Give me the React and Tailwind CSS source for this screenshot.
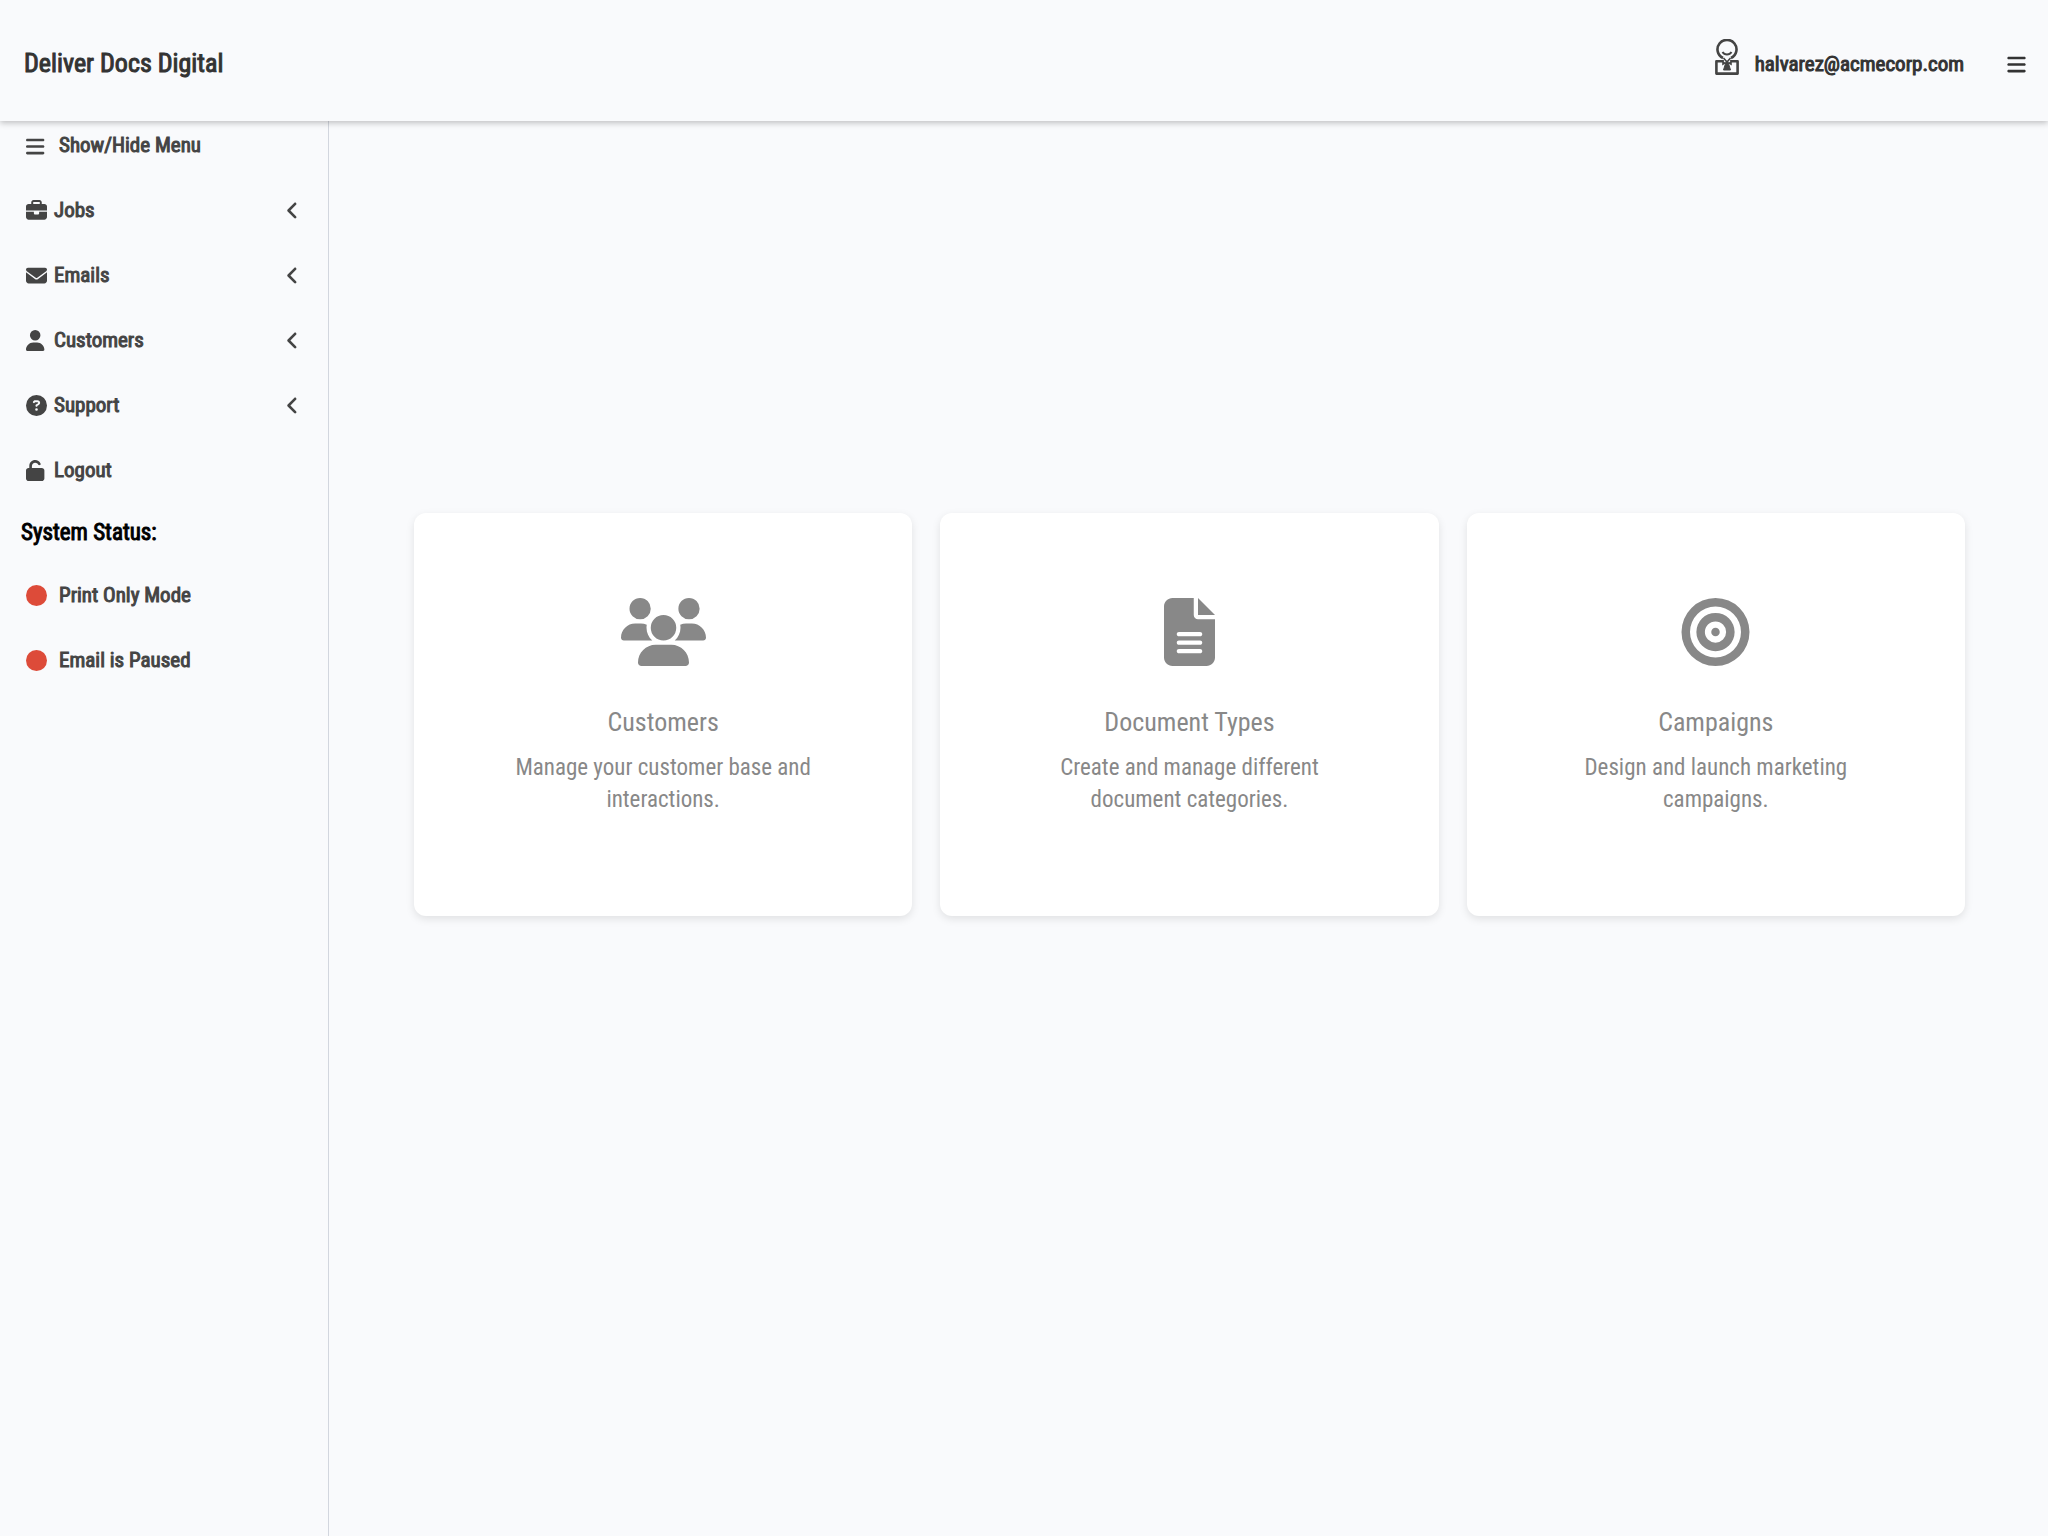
import { useState } from 'react';
import {
  FaAngleLeft,
  FaBars,
  FaBriefcase,
  FaBullseye,
  FaCircle,
  FaCircleQuestion,
  FaEnvelope,
  FaFileLines,
  FaUnlock,
  FaUser,
  FaUsers,
} from 'react-icons/fa6';

const NAV = [
  { label: 'Jobs', icon: FaBriefcase, expandable: true },
  { label: 'Emails', icon: FaEnvelope, expandable: true },
  { label: 'Customers', icon: FaUser, expandable: true },
  { label: 'Support', icon: FaCircleQuestion, expandable: true },
  { label: 'Logout', icon: FaUnlock, expandable: false },
];

const STATUSES = ['Print Only Mode', 'Email is Paused'];

const CARDS = [
  { title: 'Customers', text: 'Manage your customer base and interactions.', icon: FaUsers },
  { title: 'Document Types', text: 'Create and manage different document categories.', icon: FaFileLines },
  { title: 'Campaigns', text: 'Design and launch marketing campaigns.', icon: FaBullseye },
];

function AgentIcon() {
  return (
    <svg className="h-9 w-6 text-[#444]" viewBox="0 0 24 36" fill="none" stroke="currentColor" strokeWidth="2.6" aria-hidden="true">
      <path d="M8 19a9.500 9.500 0 1 1 8 0" />
      <path d="M7.500 13c2 3.300 7 3.300 9 0" strokeWidth="2" />
      <path d="M8.500 22.300H1.400v12.300h21.200V22.300h-7.100" strokeLinejoin="round" />
      <path d="M8.500 19l3.500 4 3.500-4M8 21v4l2.500-1.500M16 21v4l-2.500-1.500" strokeWidth="1.6" />
      <path d="M11 23h2l2.500 8h-7z" fill="currentColor" strokeWidth="1" />
    </svg>
  );
}

function Header() {
  return (
    <header className="relative z-10 flex h-[121px] items-center justify-between bg-[#f9fafc] pt-2 pr-[21px] pl-6 text-[#333] shadow-[0_2px_6px_rgba(0,0,0,0.24)] [-webkit-text-stroke:1px]">
      <a href="#home" className="pb-[3px] text-[26px]">Deliver Docs Digital</a>
      <div className="flex items-center">
        <a href="#account" className="flex items-center gap-4 text-[21px]">
          <span className="pb-4"><AgentIcon /></span>
          halvarez@acmecorp.com
        </a>
        <button type="button" aria-label="Open menu" className="ml-[42px]">
          <FaBars className="size-[21px]" />
        </button>
      </div>
    </header>
  );
}

function Sidebar({ open, onToggle }) {
  return (
    <aside className="w-[329px] shrink-0 border-r border-[#d2d6de] text-[21px] text-[#444] [-webkit-text-stroke:1px]">
      <button type="button" onClick={onToggle} className="flex h-[50px] w-full items-center gap-3 pl-[26px]">
        <FaBars className="size-[21px]" preserveAspectRatio="xMinYMid" />
        Show/Hide Menu
      </button>
      {open && (
        <nav className="mt-[7px]">
          {NAV.map(({ label, icon: Icon, expandable }) => (
            <a key={label} href={`#${label.toLowerCase()}`} className="flex h-[65px] items-center pr-[25px] pl-[26px]">
              <Icon className="size-[21px]" preserveAspectRatio="xMinYMid" />
              <span className="ml-[7px] flex-1">{label}</span>
              {expandable && <FaAngleLeft className="size-[21px]" />}
            </a>
          ))}
        </nav>
      )}
      <h2 className="flex h-[60px] items-center pl-[21px] text-[23px] text-black">System Status:</h2>
      <ul>
        {STATUSES.map((status) => (
          <li key={status} className="flex h-[65px] items-center gap-3 pl-[26px]">
            <FaCircle className="size-[21px] text-[#dd4b39]" />
            {status}
          </li>
        ))}
      </ul>
    </aside>
  );
}

function Card({ title, text, icon: Icon }) {
  return (
    <a
      href={`#${title.toLowerCase().replace(' ', '-')}`}
      className="flex min-h-[403px] flex-1 flex-col items-center rounded-xl bg-white px-20 pt-[85px] text-center text-[#888] shadow-[0_3px_8px_rgba(0,0,0,0.1)]"
    >
      <Icon className="h-[68px] w-[85px]" />
      <h3 className="mt-[38px] text-[26px] leading-9">{title}</h3>
      <p className="mt-3 text-[23px] leading-8">{text}</p>
    </a>
  );
}

export default function App() {
  const [menuOpen, setMenuOpen] = useState(true);

  return (
    <div className="flex min-h-screen flex-col bg-[#f9fafc] font-['Roboto_Condensed','Liberation_Sans_Narrow',Roboto,sans-serif]">
      <Header />
      <div className="flex flex-1">
        <Sidebar open={menuOpen} onToggle={() => setMenuOpen(!menuOpen)} />
        <main className="flex flex-1 items-center gap-7 pr-[83px] pb-[228px] pl-[85px]">
          {CARDS.map((card) => (
            <Card key={card.title} {...card} />
          ))}
        </main>
      </div>
    </div>
  );
}
